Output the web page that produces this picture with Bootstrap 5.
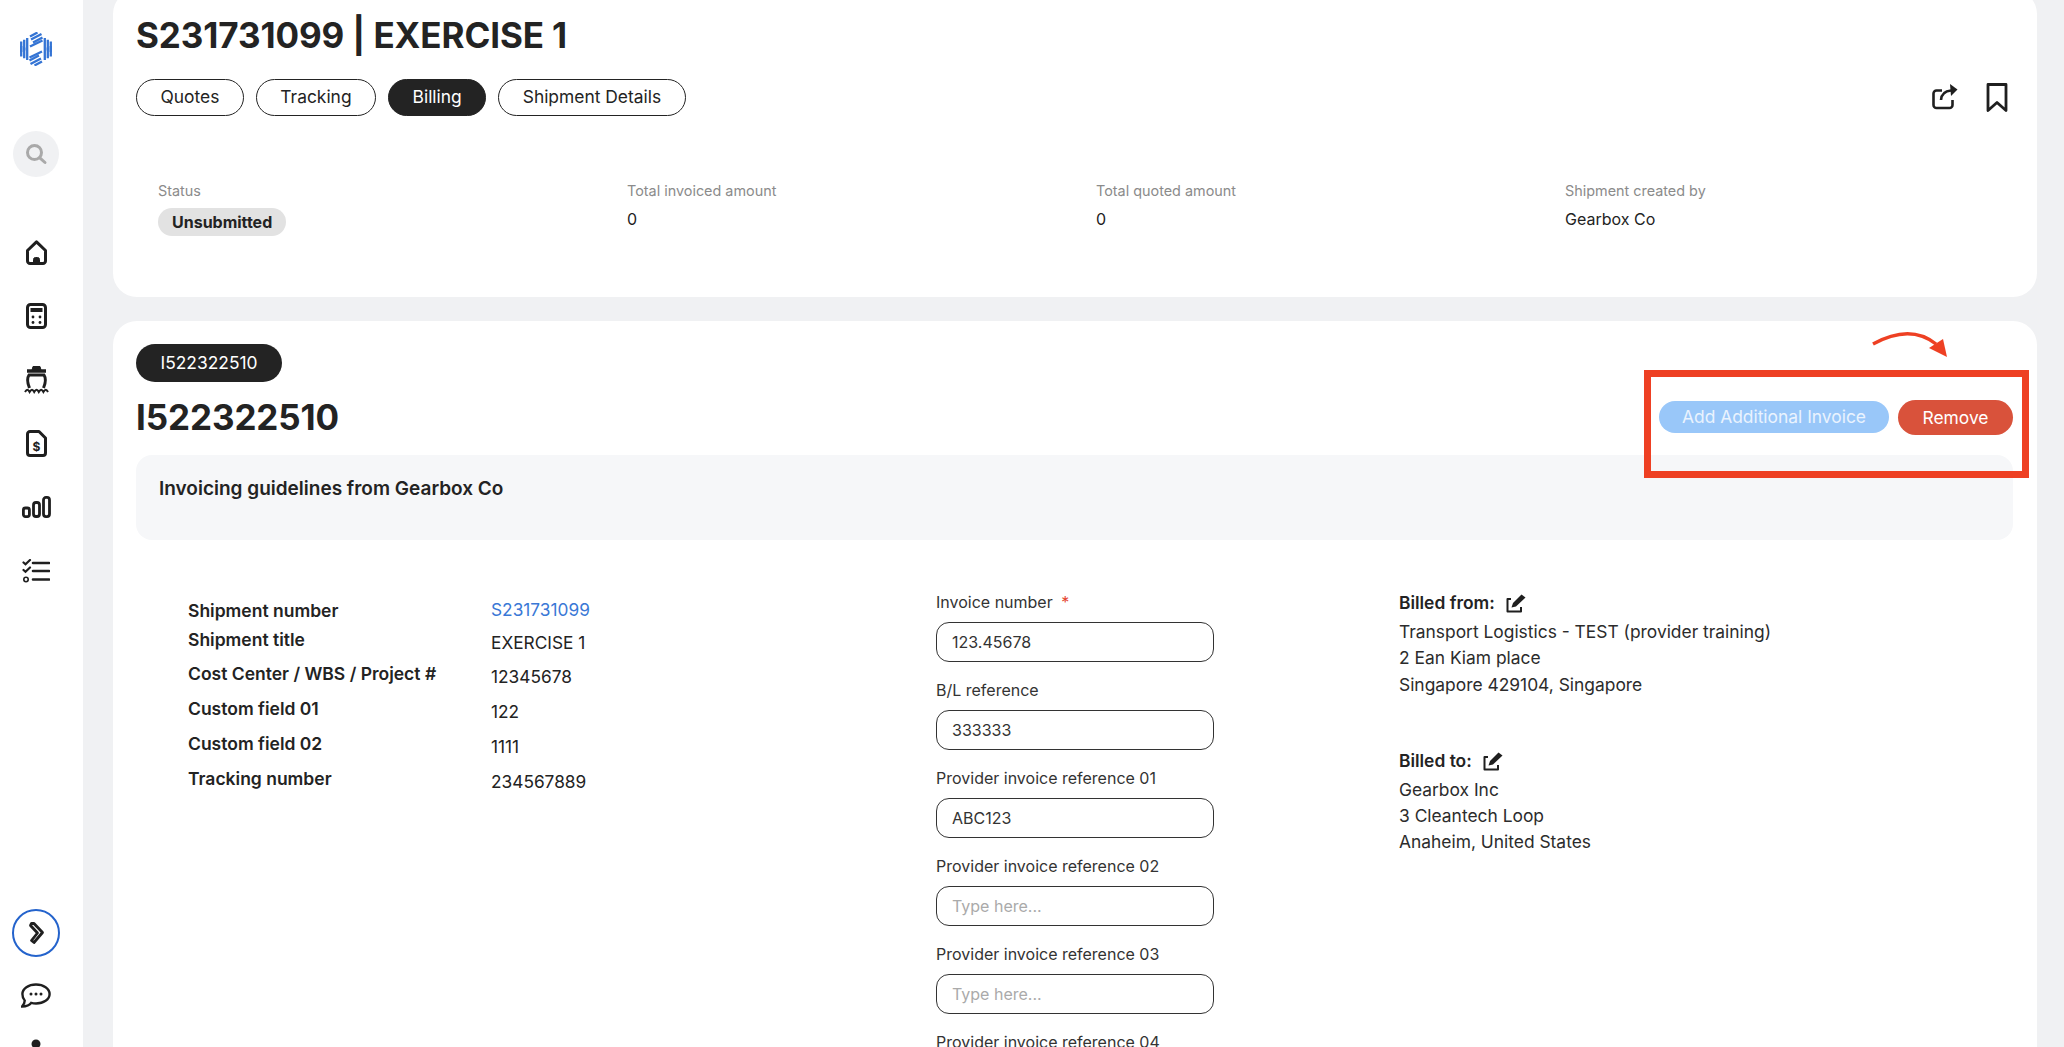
<!doctype html>
<html lang="en"><head><meta charset="utf-8"><title>Billing</title>
<link href="https://cdn.jsdelivr.net/npm/bootstrap@5.3.0/dist/css/bootstrap.min.css" rel="stylesheet">
<style>
html,body{height:100%;overflow:hidden}
body{font-family:Inter,"Liberation Sans",sans-serif;background:#f0f1f3;color:#232323;font-size:16px}
.shell{height:1047px;overflow:hidden}
.side{width:83px;flex:none;background:#fff;height:1047px;overflow:hidden;padding-right:11px}
.side-logo{height:34px;margin-top:32px;width:32px;flex:none}
.side-search{width:46px;height:46px;border-radius:50%;background:#f0f1f3;margin-top:65px;margin-bottom:44px;flex:none}
.side-item{height:63.6px;flex:none}
.side-go{width:48px;height:48px;border-radius:50%;border:2.5px solid #2463cc;margin-bottom:25px;flex:none}
.side-chat{height:36px;margin-bottom:21px;flex:none}
.main-area{padding:0 27px 0 30px;min-width:0}
.panel{background:#fff;border-radius:24px;border:0}
.panel-top{margin-top:-10px;height:307px;padding:23px 24px 0 23px}
.panel-bill{margin-top:24px;padding:23px 24px 0 23px;height:760px;position:relative}
.big-title{font-size:35px;font-weight:700;line-height:44px;margin:0;letter-spacing:-.1px}
.tab-pill{height:37px;border:1.5px solid #232323;background:#fff;color:#232323;font-size:17.4px;padding:0 23.5px;line-height:34px;border-radius:19px}
.tab-pill.on{background:#232323;color:#fff}
.tabs-row{margin-top:21.5px;gap:12px}
.icons-r{gap:28px;padding-right:5px;padding-bottom:3px}
.icon-share{margin-bottom:3px}
.stats{margin-top:65px;padding-left:22px}
.stat-col{width:469px;flex:none}
.stat-lab{font-size:14.4px;color:#8b8b8b;line-height:20px}
.stat-val{font-size:16px;line-height:20px;margin-top:8px}
.state-tag{background:#e2e2e2;color:#232323;font-weight:700;font-size:16px;border-radius:14px;height:28px;line-height:28px;padding:0 14px;margin-top:7px;display:inline-block}
.inv-tag{background:#232323;color:#fff;height:38px;border-radius:19px;line-height:38px;width:146px;text-align:center;font-size:17.4px}
.inv-head{height:56px;margin-top:7px}
.act-row{gap:9px}
.act-add{background:#99c7f9;border:0;color:#eaf3fe;height:32px;width:230px;padding:0;border-radius:16px;font-size:17.4px;line-height:32px}
.act-del{background:#d9523b;border:0;color:#fff;height:35px;width:115px;padding:0;border-radius:18px;font-size:17.4px;line-height:35px}
.guide{background:#f6f7f9;border-radius:16px;height:85px;padding:21px 23px;font-weight:600;font-size:19px;line-height:26px;margin-top:10px}
.det{margin-top:51px}
.det-left{width:800px;flex:none;padding-left:52px;padding-top:9px}
.det-row{display:flex;height:35px}
.det-row:nth-child(1){height:29px}
.det-row:nth-child(2){height:34px}
.det-k{width:303px;flex:none;font-weight:600;font-size:17.5px;line-height:22px}
.det-v{font-size:17.3px;line-height:22px;position:relative;top:3px}
.det-row:nth-child(1) .det-v{top:-1px}
.det-v a{color:#3a78d6;text-decoration:none}
.fld-col{width:463px;flex:none;padding-top:1px}
.fld-lab{font-size:16px;line-height:20px;color:#333;margin:0 0 10px}
.fld-lab b{color:#e5452f;font-weight:400;margin-left:4px}
.fld-in{width:278px;height:40px;border:1.6px solid #333;border-radius:13px;padding:0 15px;font-size:16px;color:#333;margin-bottom:18px;box-shadow:none}
.fld-in::placeholder{color:#aaa}
.addr-h{font-weight:600;font-size:17.4px;line-height:24px;margin-bottom:4px;gap:11px}
.addr-l{font-size:17.4px;line-height:26.3px;color:#2c2c2c}
.addr-gap{margin-top:51px}
.mark-box{position:absolute;left:1531px;top:49px;width:385px;height:108px;border:7px solid #ee4023}
.mark-arrow{position:absolute;left:1755px;top:5px}
</style></head><body>
<div class="d-flex shell">
<nav class="side d-flex flex-column align-items-center">
<svg class="side-logo" viewBox="-16 -17 32 34" width="32" height="34"><g fill="none" stroke="#3474d4" stroke-width="2.300">
<g id="wv"><path d="M-14.800 -7.500V3M-11.800 -9.200V1.500M-8.800 -11V0"/></g>
<use href="#wv" transform="scale(-1 1)"/><use href="#wv" transform="rotate(180)"/><use href="#wv" transform="scale(1 -1)"/>
<path d="M-6 -12.500 1.500 -16.500M-5 -9.500 5.500 -15M-3 -6.500 6.500 -11.500M-6 -2.500 6.500 -8.500"/>
<path d="M6 12.500 -1.500 16.500M5 9.500 -5.500 15M3 6.500 -6.500 11.500M6 2.500 -6.500 8.500"/>
</g></svg>
<div class="side-search d-flex align-items-center justify-content-center"><svg width="24" height="24" viewBox="0 0 24 24" fill="none" stroke="#a9a9a9" stroke-width="3"><circle cx="10.500" cy="10.500" r="7"/><path d="M15.800 15.800 21 20.500" stroke-linecap="round"/></svg></div>
<div class="side-item d-flex align-items-center"><svg width="21" height="25" viewBox="0 0 21 25" fill="none" stroke="#1f1f1f" stroke-width="3" stroke-linejoin="round"><path d="M1.500 10.500 10.500 1.800l9 8.700V21a2.500 2.500 0 0 1-2.500 2.500H4A2.500 2.500 0 0 1 1.500 21z"/><path d="M7.500 23.500v-4a2 2 0 0 1 2-2h2a2 2 0 0 1 2 2v4z" fill="#1f1f1f" stroke-width="1"/></svg></div>
<div class="side-item d-flex align-items-center"><svg width="21" height="26" viewBox="0 0 21 26" fill="none" stroke="#1f1f1f" stroke-width="3"><rect x="1.500" y="1.500" width="18" height="23" rx="3"/><rect x="4.500" y="5" width="12" height="4" fill="#1f1f1f" stroke="none"/><g fill="#1f1f1f" stroke="none"><circle cx="7" cy="14" r="1.400"/><circle cx="14" cy="14" r="1.400"/><circle cx="7" cy="19.500" r="1.400"/><circle cx="14" cy="19.500" r="1.400"/></g></svg></div>
<div class="side-item d-flex align-items-center"><svg width="25" height="29" viewBox="0 0 25 29" fill="none" stroke="#1f1f1f"><path d="M8 5 9 1.500h7L17 5z" fill="#1f1f1f"/><path d="M3 6h19" stroke-width="3.500"/><path d="M5.500 23C3 17 3 13 5 10h15c2 3 2 7-.5 13" stroke-width="3"/><path d="M1 27c1.800-3 3-3 4.600 0 1.800-3 3-3 4.600 0 1.800-3 3-3 4.600 0 1.800-3 3-3 4.600 0 1.800-3 3-3 4.600 0" stroke-width="2"/></svg></div>
<div class="side-item d-flex align-items-center"><svg width="21" height="27" viewBox="0 0 21 27" fill="none" stroke="#1f1f1f" stroke-width="3" stroke-linejoin="round"><path d="M4 1.500h9l6.500 6.500v15a2.500 2.500 0 0 1-2.500 2.500H4A2.500 2.500 0 0 1 1.500 23V4A2.500 2.500 0 0 1 4 1.500z"/><text x="10.500" y="20.500" font-size="12" font-weight="700" text-anchor="middle" fill="#1f1f1f" stroke="none" font-family="Inter,sans-serif">$</text></svg></div>
<div class="side-item d-flex align-items-center"><svg width="29" height="22" viewBox="0 0 29 22" fill="none" stroke="#1f1f1f" stroke-width="2.800"><rect x="1.400" y="12" width="6" height="8.600" rx="2"/><rect x="11.500" y="6.500" width="6" height="14" rx="2.500"/><rect x="21.500" y="1.400" width="6" height="19.200" rx="2.500"/></svg></div>
<div class="side-item d-flex align-items-center"><svg width="28" height="24" viewBox="0 0 28 24" fill="none" stroke="#1f1f1f" stroke-width="2.600" stroke-linecap="round"><path d="M11 4h16M11 12h16M11 20.500h16"/><path d="M1.500 3.500l2 1.800L8 1M1.500 11l2 1.800L8 8.500" stroke-width="2.200"/><circle cx="4" cy="20.500" r="2.200" stroke-width="1.600"/></svg></div>
<div class="flex-grow-1"></div>
<div class="side-go d-flex align-items-center justify-content-center"><svg width="17" height="24" viewBox="0 0 17 24" fill="none" stroke="#1f1f1f" stroke-width="2.800" stroke-linejoin="round"><path d="M3.500 2.500 6 2.500 14.500 11.500 6 21.500 3.500 19.500 9.500 12 2.500 4.500z"/></svg></div>
<div class="side-chat"><svg width="30" height="26" viewBox="0 0 30 26" fill="none" stroke="#1f1f1f" stroke-width="2.400"><path d="M1.400 11C1.400 5.500 7.500 1.500 15 1.500s13.600 4 13.600 9.500-6 9.500-13.600 9.500c-1.700 0-3.300-.2-4.800-.6C8.500 22.500 5 23.500 1 23.500c1.500-1.500 2.800-3.500 2.700-6C2.200 16 1.400 13.500 1.400 11z"/><g fill="#1f1f1f" stroke="none"><circle cx="10" cy="11" r="1.500"/><circle cx="15" cy="11" r="1.500"/><circle cx="20" cy="11" r="1.500"/></g></svg></div>
<div class="d-flex"><svg width="14" height="8" viewBox="0 0 14 8"><circle cx="7" cy="5" r="4.500" fill="#1f1f1f"/></svg></div>
</nav>
<main class="main-area flex-grow-1">
<section class="panel panel-top">
<div class="d-flex justify-content-between">
<div>
<h1 class="big-title">S231731099 | EXERCISE 1</h1>
<div class="d-flex tabs-row"><button class="btn tab-pill">Quotes</button><button class="btn tab-pill">Tracking</button><button class="btn tab-pill on">Billing</button><button class="btn tab-pill">Shipment Details</button></div>
</div>
<div class="d-flex align-items-end icons-r">
<svg class="icon-share" width="26" height="27" viewBox="0 0 26 27" fill="none" stroke="#1f1f1f" stroke-width="2.600" stroke-linejoin="round"><path d="M10 7.500H4.500a3 3 0 0 0-3 3V22a3 3 0 0 0 3 3h13a3 3 0 0 0 3-3v-5"/><path d="M9 17c.5-6 4-9 10-9.500"/><path d="M18 1 25.500 6.500 19 13z" fill="#1f1f1f" stroke="none"/></svg>
<svg width="22" height="30" viewBox="0 0 22 30" fill="none" stroke="#1f1f1f" stroke-width="2.800" stroke-linejoin="round"><path d="M2 1.500h18v26l-9-8-9 8z"/></svg>
</div>
</div>
<div class="d-flex stats">
<div class="stat-col"><div class="stat-lab">Status</div><span class="state-tag">Unsubmitted</span></div>
<div class="stat-col"><div class="stat-lab">Total invoiced amount</div><div class="stat-val">0</div></div>
<div class="stat-col"><div class="stat-lab">Total quoted amount</div><div class="stat-val">0</div></div>
<div class="stat-col"><div class="stat-lab">Shipment created by</div><div class="stat-val">Gearbox Co</div></div>
</div>
</section>
<section class="panel panel-bill">
<div class="inv-tag">I522322510</div>
<div class="d-flex justify-content-between align-items-center inv-head">
<h2 class="big-title">I522322510</h2>
<div class="d-flex align-items-center act-row"><button class="btn act-add">Add Additional Invoice</button><button class="btn act-del">Remove</button></div>
</div>
<div class="guide">Invoicing guidelines from Gearbox Co</div>
<div class="d-flex det">
<div class="det-left">
<div class="det-row"><div class="det-k">Shipment number</div><div class="det-v"><a href="#">S231731099</a></div></div>
<div class="det-row"><div class="det-k">Shipment title</div><div class="det-v">EXERCISE 1</div></div>
<div class="det-row"><div class="det-k">Cost Center / WBS / Project #</div><div class="det-v">12345678</div></div>
<div class="det-row"><div class="det-k">Custom field 01</div><div class="det-v">122</div></div>
<div class="det-row"><div class="det-k">Custom field 02</div><div class="det-v">1111</div></div>
<div class="det-row"><div class="det-k">Tracking number</div><div class="det-v">234567889</div></div>
</div>
<div class="fld-col">
<p class="fld-lab">Invoice number <b>*</b></p><input class="form-control fld-in" value="123.45678">
<p class="fld-lab">B/L reference</p><input class="form-control fld-in" value="333333">
<p class="fld-lab">Provider invoice reference 01</p><input class="form-control fld-in" value="ABC123">
<p class="fld-lab">Provider invoice reference 02</p><input class="form-control fld-in" placeholder="Type here...">
<p class="fld-lab">Provider invoice reference 03</p><input class="form-control fld-in" placeholder="Type here...">
<p class="fld-lab">Provider invoice reference 04</p>
</div>
<div>
<div class="addr-h d-flex align-items-center">Billed from: <svg width="20" height="20" viewBox="0 0 20 20" fill="none" stroke="#1f1f1f" stroke-width="2"><path d="M5 6H1.500v12.500H15V14" stroke-linejoin="round"/><path d="M5.500 14.500 7 10 15.500 1.500 19.500 4.500 10 13.500z" fill="#1f1f1f" stroke="none"/></svg></div>
<div class="addr-l">Transport Logistics - TEST (provider training)</div><div class="addr-l">2 Ean Kiam place</div><div class="addr-l">Singapore 429104, Singapore</div>
<div class="addr-h d-flex align-items-center addr-gap">Billed to: <svg width="20" height="20" viewBox="0 0 20 20" fill="none" stroke="#1f1f1f" stroke-width="2"><path d="M5 6H1.500v12.500H15V14" stroke-linejoin="round"/><path d="M5.500 14.500 7 10 15.500 1.500 19.500 4.500 10 13.500z" fill="#1f1f1f" stroke="none"/></svg></div>
<div class="addr-l">Gearbox Inc</div><div class="addr-l">3 Cleantech Loop</div><div class="addr-l">Anaheim, United States</div>
</div>
</div>
<div class="mark-box"></div>
<svg class="mark-arrow" width="84" height="36" viewBox="0 0 84 36" fill="none"><path d="M5 18C25 7 48 2 68 18" stroke="#ee4023" stroke-width="3.500"/><path d="M75 13 79 31 61 22z" fill="#ee4023"/></svg>
</section>
</main>
</div>
<script src="https://cdn.jsdelivr.net/npm/bootstrap@5.3.0/dist/js/bootstrap.bundle.min.js"></script>
</body></html>
